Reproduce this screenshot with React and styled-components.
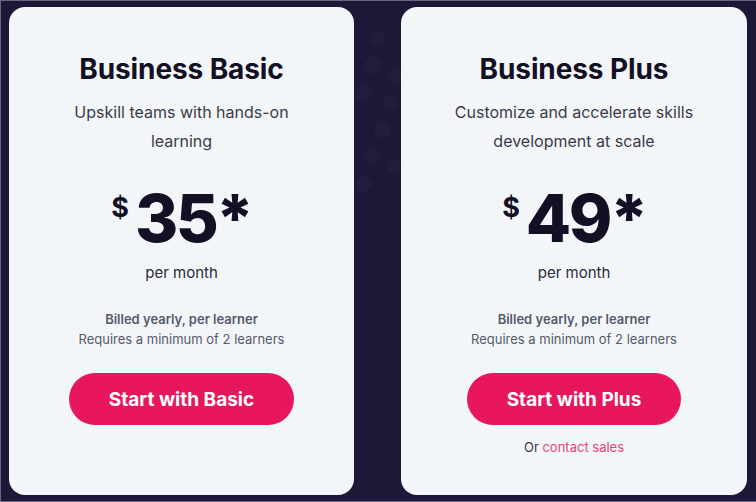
import React from "react";
import styled, { createGlobalStyle } from "styled-components";

const Global = createGlobalStyle`
  html, body { margin: 0; padding: 0; }
  body { font-family: Inter, "Noto Sans", sans-serif; background: #1d1838; }
`;

const Page = styled.div`
  box-sizing: border-box;
  width: 756px;
  height: 502px;
  border-top: 1px solid #6a6780;
  border-left: 1px solid #6a6780;
  border-bottom: 1px solid #6a6780;
  background-color: #1d1838;
  background-image:
    radial-gradient(circle at 376px 38px, rgba(255,255,255,0.025) 0 7px, transparent 8px),
    radial-gradient(circle at 372px 64px, rgba(255,255,255,0.025) 0 8px, transparent 9px),
    radial-gradient(circle at 395px 75px, rgba(255,255,255,0.025) 0 7px, transparent 8px),
    radial-gradient(circle at 362px 92px, rgba(255,255,255,0.025) 0 8px, transparent 9px),
    radial-gradient(circle at 390px 102px, rgba(255,255,255,0.025) 0 7px, transparent 8px),
    radial-gradient(circle at 381px 129px, rgba(255,255,255,0.025) 0 8px, transparent 9px),
    radial-gradient(circle at 371px 155px, rgba(255,255,255,0.025) 0 7px, transparent 8px),
    radial-gradient(circle at 393px 165px, rgba(255,255,255,0.025) 0 7px, transparent 8px),
    radial-gradient(circle at 363px 183px, rgba(255,255,255,0.025) 0 7px, transparent 8px);
  display: flex;
  gap: 47px;
  padding: 6px 9px 6px 8px;
`;

const Card = styled.div`
  width: ${(p) => p.$w}px;
  height: 488px;
  background: #f3f6f9;
  border-radius: 16px;
  display: flex;
  flex-direction: column;
  align-items: center;
  text-align: center;
  padding-top: 45px;
  box-sizing: border-box;
`;

const Title = styled.h2`
  margin: 0;
  font-size: 28px;
  line-height: 34px;
  font-weight: 700;
  color: #130f25;
  letter-spacing: -0.1px;
`;

const Desc = styled.p`
  margin: 12px 0 0;
  width: 250px;
  font-size: 16px;
  line-height: 29px;
  color: #3b3a4a;
`;

const PriceRow = styled.div`
  margin-top: 29px;
  display: flex;
  align-items: flex-start;
  color: #130f25;
  font-weight: 800;
`;

const Currency = styled.span`
  font-size: 27px;
  line-height: 27px;
  margin-top: 9px;
  margin-right: 6px;
  font-weight: 700;
`;

const Amount = styled.span`
  font-size: 66px;
  line-height: 66px;
  letter-spacing: -2.5px;
`;

const Period = styled.div`
  margin-top: 12px;
  font-size: 15px;
  line-height: 20px;
  color: #2b2a3a;
`;

const Billing = styled.div`
  margin-top: ${(p) => (p.$bold ? 26 : 0)}px;
  font-size: 13px;
  line-height: 20px;
  color: #555a6b;
  font-weight: ${(p) => (p.$bold ? 600 : 400)};
`;

const CTA = styled.button`
  margin-top: 24px;
  height: 52px;
  padding: 0 40px;
  border: none;
  border-radius: 26px;
  background: #e8175d;
  color: #fff;
  font-family: inherit;
  font-size: 19px;
  font-weight: 700;
  cursor: pointer;
`;

const Alt = styled.div`
  margin-top: 13px;
  font-size: 13px;
  line-height: 18px;
  color: #3b3a4a;
`;

const Link = styled.a`
  color: #e8437c;
  text-decoration: none;
`;

const plans = [
  {
    w: 345,
    title: "Business Basic",
    desc: "Upskill teams with hands-on learning",
    price: "35*",
    cta: "Start with Basic",
  },
  {
    w: 346,
    title: "Business Plus",
    desc: "Customize and accelerate skills development at scale",
    price: "49*",
    cta: "Start with Plus",
    sales: true,
  },
];

export default function App() {
  return (
    <>
      <Global />
      <Page>
        {plans.map((p) => (
          <Card key={p.title} $w={p.w}>
            <Title>{p.title}</Title>
            <Desc>{p.desc}</Desc>
            <PriceRow>
              <Currency>$</Currency>
              <Amount>{p.price}</Amount>
            </PriceRow>
            <Period>per month</Period>
            <Billing $bold>Billed yearly, per learner</Billing>
            <Billing>Requires a minimum of 2 learners</Billing>
            <CTA>{p.cta}</CTA>
            {p.sales && (
              <Alt>
                Or <Link href="#">contact sales</Link>
              </Alt>
            )}
          </Card>
        ))}
      </Page>
    </>
  );
}
